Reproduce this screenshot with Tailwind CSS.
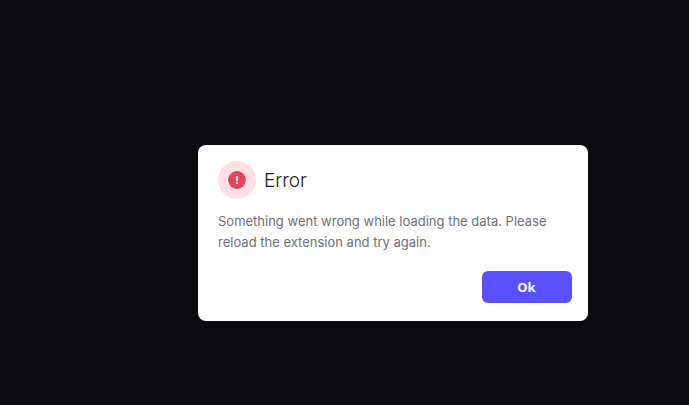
<!DOCTYPE html>
<html lang="en">
  <head>
    <meta charset="UTF-8" />
    <meta name="viewport" content="width=device-width, initial-scale=1.0" />
    <title>Error</title>
    <script src="https://cdn.jsdelivr.net/npm/@tailwindcss/browser@4"></script>
  </head>
  <body class="h-screen overflow-hidden bg-[#0a0a0f] pt-[145px] pl-[198px] font-['Inter',sans-serif]">

    <!-- Error dialog -->
    <div role="alertdialog" class="flex flex-col w-[390px] h-[176px] bg-white rounded-lg pt-4 pl-5 pr-4">
      <!-- Title -->
      <div class="flex items-center gap-2">
        <span class="flex items-center justify-center w-[38px] h-[38px] rounded-full bg-[#ffdfe5]">
          <svg class="w-[18px] h-[18px]" viewBox="0 0 18 18" fill="none">
            <circle cx="9" cy="9" r="8.9" fill="#e0455c" />
            <path d="M9 5v5" stroke="#fff" stroke-width="1.7" />
            <path d="M9 11.3v1.7" stroke="#fff" stroke-width="1.7" />
          </svg>
        </span>
        <h1 class="pt-0.5 text-[19px] font-light leading-6 text-[#1c1c28]">Error</h1>
      </div>

      <!-- Message -->
      <p class="mt-3 text-[13px] leading-[21px] text-[#6f6f78] whitespace-nowrap">
        Something went wrong while loading the data. Please<br />
        reload the extension and try again.
      </p>

      <button class="mt-[18px] self-end w-[90px] h-8 rounded-md bg-[#5b50ff] pt-0.5 pr-px font-['Noto_Sans',sans-serif] text-[13px] font-bold text-white">Ok</button>
    </div>
  </body>
</html>
